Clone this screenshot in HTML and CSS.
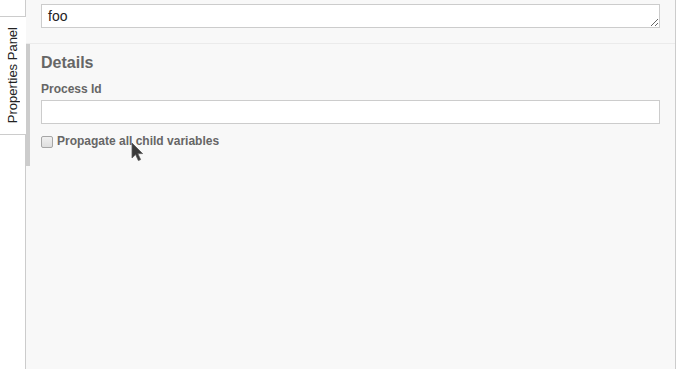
FILE: index.html
```html
<!DOCTYPE html>
<html>
<head>
<meta charset="utf-8">
<link rel="stylesheet" href="styles.css">
</head>
<body>
<div class="app">
  <div class="sidebar">
    <div class="tab"><span class="tab-label">Properties Panel</span></div>
  </div>
  <div class="panel">
    <div class="top-section">
      <textarea class="textarea" rows="1">foo</textarea>
    </div>
    <div class="group">
      <div class="group-label">Details</div>
      <label class="field-label" for="pid">Process Id</label>
      <input class="input" id="pid" type="text">
      <div class="check-row">
        <input class="checkbox" type="checkbox" id="prop">
        <label class="check-label" for="prop">Propagate all child variables</label>
      </div>
    </div>
  </div>
</div>
<svg class="cursor" width="14" height="20" viewBox="0 0 14 20">
  <path d="M1 1 L1 16 L4.6 12.6 L7.4 18.6 L9.6 17.6 L6.8 11.6 L11.6 11.6 Z" fill="#3a3a3a" stroke="#5a5a5a" stroke-width="0.8" stroke-linejoin="round"/>
</svg>
</body>
</html>
```
FILE: styles.css
```css
html, body {
  margin: 0;
  padding: 0;
  background: #ffffff;
  font-family: "Liberation Sans", Arial, sans-serif;
}
.app {
  display: flex;
  height: 369px;
}
.sidebar {
  width: 25px;
  flex: none;
  display: flex;
  flex-direction: column;
}
.tab {
  width: 26px;
  margin-right: -1px;
  margin-top: 16px;
  height: 119px;
  box-sizing: border-box;
  border-top: 1px solid #cccccc;
  border-bottom: 1px solid #cccccc;
  background: #ffffff;
  z-index: 2;
  display: flex;
  align-items: center;
  justify-content: center;
}
.tab-label {
  writing-mode: vertical-rl;
  transform: rotate(180deg);
  font-size: 13px;
  line-height: 14px;
  color: #222222;
  white-space: nowrap;
  margin-left: -1px;
}
.panel {
  flex: 1;
  margin-right: 3px;
  background: #f8f8f8;
  border-left: 1px solid #cccccc;
  border-right: 1px solid #cccccc;
  display: flex;
  flex-direction: column;
}
.top-section {
  padding: 4px 15px 0 15px;
  height: 44px;
  box-sizing: border-box;
  border-bottom: 1px solid #ebebeb;
}
.textarea {
  display: block;
  width: 100%;
  height: 24px;
  box-sizing: border-box;
  margin: 0;
  border: 1px solid #cccccc;
  background: #ffffff;
  padding: 3px 6px 0 6px;
  font-family: "Liberation Sans", Arial, sans-serif;
  font-size: 14px;
  line-height: 16px;
  color: #222222;
  resize: vertical;
  overflow: hidden;
  outline: none;
}
.group {
  border-left: 4px solid #cccccc;
  padding: 9px 15px 17px 11px;
  display: flex;
  flex-direction: column;
}
.group-label {
  font-size: 16px;
  line-height: 20px;
  font-weight: bold;
  color: #666666;
}
.field-label {
  margin-top: 9px;
  font-size: 12px;
  line-height: 15px;
  font-weight: bold;
  color: #666666;
}
.input {
  margin: 3px 0 0 0;
  height: 24px;
  box-sizing: border-box;
  border: 1px solid #cccccc;
  background: #ffffff;
  padding: 0 6px;
  font-size: 14px;
  outline: none;
}
.check-row {
  margin-top: 10px;
  display: flex;
  align-items: center;
  height: 15px;
}
.checkbox {
  -webkit-appearance: none;
  appearance: none;
  margin: 0 4px 0 0;
  width: 12px;
  height: 12px;
  box-sizing: border-box;
  border: 1px solid #a6a6a6;
  border-radius: 2px;
  background: linear-gradient(#f0f0f0, #dedede);
}
.check-label {
  font-size: 12px;
  line-height: 15px;
  font-weight: bold;
  color: #666666;
}
.cursor {
  position: absolute;
  left: 131px;
  top: 142px;
}
```
